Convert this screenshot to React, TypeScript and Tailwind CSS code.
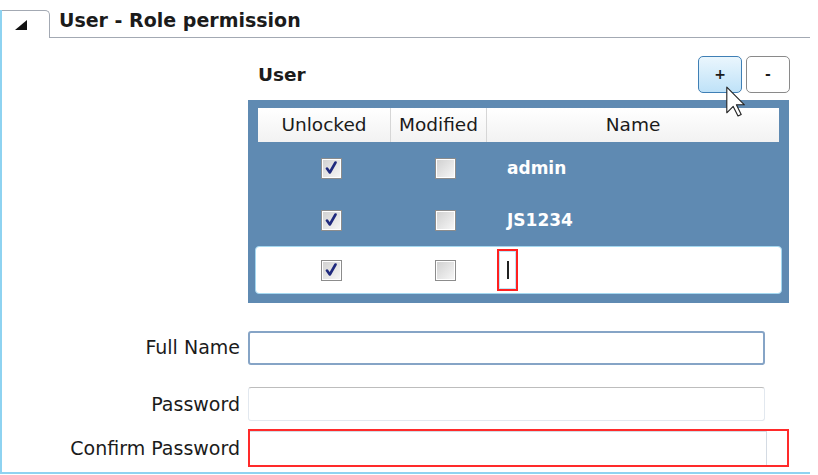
import React from "react";

function Check({ checked }: { checked: boolean }) {
  return (
    <div className="w-[21px] h-[21px] border border-[#8c8c8c] bg-[linear-gradient(135deg,#cfcfcf,#f8f8f8)] shadow-[inset_0_0_0_1px_#ffffff] flex items-center justify-center">
      {checked && (
        <svg width="14" height="14" viewBox="0 0 14 14">
          <path d="M3 7.5 L5.8 11.5 L11.5 1.5" stroke="#1f2a7e" strokeWidth="2.6" fill="none" strokeLinecap="round" strokeLinejoin="round" />
        </svg>
      )}
    </div>
  );
}

function Row({ name, checked }: { name: string; checked: boolean }) {
  return (
    <div className="h-[52px] flex items-center">
      <div className="w-[133px] flex justify-center pl-[13px]">
        <Check checked={checked} />
      </div>
      <div className="w-[96px] flex justify-center pl-[13px]">
        <Check checked={false} />
      </div>
      <div className="flex-1 pl-[20px] text-white font-bold text-[17px] leading-[22px]">{name}</div>
    </div>
  );
}

export default function App() {
  return (
    <div className="w-[818px] h-[475px] bg-white relative overflow-hidden font-['DejaVu_Sans',Verdana,sans-serif] text-[#1b1b1b]">
      <div className="mt-[10px] w-[810px] h-[464px] border-l-2 border-b-2 border-[#8ed3f1] flex flex-col">
        {/* header */}
        <div className="h-[28px] flex">
          <div className="w-[48px] h-full border-t border-r border-[#a3a9b3] rounded-tr-[5px] pl-[13px] pt-[9px]">
            <svg width="12" height="10" viewBox="0 0 12 10">
              <polygon points="0,10 12,0 12,10" fill="#111" />
            </svg>
          </div>
          <div className="flex-1 h-full border-b border-[#a3a9b3] pl-[9px] font-bold text-[19px] leading-[20px]">
            User - Role permission
          </div>
        </div>

        {/* user row */}
        <div className="mt-[18px] ml-[246px] w-[542px] h-[37px] flex items-center justify-between">
          <div className="pl-[10px] font-bold text-[18.5px] leading-[22px]">User</div>
          <div className="flex gap-[4px] h-full">
            <div className="w-[44px] h-full rounded-[5px] border border-[#3f7fb5] bg-[linear-gradient(#eaf6fd,#bfe2f8)] flex items-center justify-center text-[14px] font-bold">+</div>
            <div className="w-[44px] h-full rounded-[5px] border border-[#8a8a8a] bg-white flex items-center justify-center text-[14px] font-bold">-</div>
          </div>
        </div>

        {/* grid */}
        <div className="mt-[7px] ml-[246px] w-[541px] h-[203px] bg-[#5f8ab2] pt-[8px] px-[10px] flex flex-col">
          <div className="h-[34px] bg-[linear-gradient(#ffffff,#f2f2f2)] flex text-[18.5px] leading-[22px] text-[#1b1b1b]">
            <div className="w-[133px] border-r border-[#d6d6d6] flex items-center justify-center">Unlocked</div>
            <div className="w-[96px] border-r border-[#d6d6d6] flex items-center justify-center">Modified</div>
            <div className="flex-1 flex items-center justify-center">Name</div>
          </div>
          <Row name="admin" checked />
          <Row name="JS1234" checked />
          <div className="h-[48px] -mx-[3px] border border-[#a5d8f0] rounded-[4px] bg-white pl-[2px] flex items-center">
            <div className="w-[133px] flex justify-center pl-[13px]">
              <Check checked />
            </div>
            <div className="w-[96px] flex justify-center pl-[13px]">
              <Check checked={false} />
            </div>
            <div className="flex-1 pl-[10px] flex items-center">
              <div className="w-[21px] h-[42px] border-2 border-[#ff2020] shadow-[inset_0_0_0_1px_#bfe4f5] flex items-center justify-center">
                <div className="w-[2px] h-[18px] bg-[#222]" />
              </div>
            </div>
          </div>
        </div>

        {/* form */}
        <div className="mt-[28px] flex items-center h-[34px] gap-[8px]">
          <div className="w-[238px] text-right text-[19px] leading-[22px] pb-[3px]">Full Name</div>
          <div className="w-[517px] h-full border-2 border-[#86a4c6] rounded-[3px] bg-white" />
        </div>
        <div className="mt-[22px] flex items-center h-[34px] gap-[8px]">
          <div className="w-[238px] text-right text-[19px] leading-[22px]">Password</div>
          <div className="w-[517px] h-full border border-[#e2e8ef] border-t-[#bdbdbd] rounded-[3px] bg-white" />
        </div>
        <div className="mt-[8px] flex items-center h-[38px] gap-[8px]">
          <div className="w-[238px] text-right text-[19px] leading-[22px]">Confirm Password</div>
          <div className="w-[541px] h-full border-2 border-[#ff2a2a] bg-white">
            <div className="w-[517px] h-full border-t border-r border-[#d4dbe3]" />
          </div>
        </div>
      </div>

      {/* mouse cursor */}
      <svg className="absolute left-[726px] top-[86px]" width="20" height="32" viewBox="-0.5 -0.5 12.5 19.5">
        <polygon points="0,0 0,16 4,12 7,18 9,17 6,11 11,11" fill="#ffffff" stroke="#222" strokeWidth="0.7" strokeLinejoin="round" />
      </svg>
    </div>
  );
}
